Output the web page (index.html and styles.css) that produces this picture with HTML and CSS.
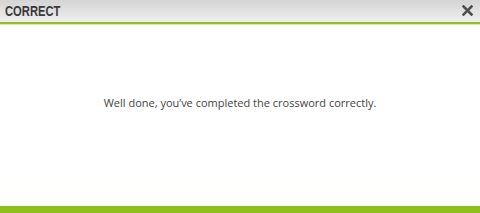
FILE: index.html
```html
<!DOCTYPE html>
<html>
<head>
<meta charset="utf-8">
<link rel="stylesheet" href="styles.css">
</head>
<body>
<div class="dialog">
  <div class="header">
    <span class="title">CORRECT</span>
    <svg class="close" width="11" height="11" viewBox="0 0 11 11"><path d="M1.5 1.5 L9.5 9.5 M9.5 1.5 L1.5 9.5" stroke="#505050" stroke-width="2.6" stroke-linecap="square"/></svg>
  </div>
  <div class="rule"></div>
  <div class="body">
    <p class="message">Well done, you’ve completed the crossword correctly.</p>
  </div>
  <div class="footer"></div>
</div>
</body>
</html>
```
FILE: styles.css
```css
html, body {
  margin: 0;
  padding: 0;
  background: #ffffff;
}
.dialog {
  width: 480px;
  height: 213px;
  display: flex;
  flex-direction: column;
}
.header {
  height: 22px;
  display: flex;
  align-items: center;
  justify-content: space-between;
  padding: 0 7px 0 5px;
  background: linear-gradient(#d4d4d4, #efefef);
}
.title {
  display: inline-block;
  font-family: "Liberation Sans", sans-serif;
  font-weight: bold;
  font-size: 14px;
  color: #3a3a3a;
  transform: scaleX(0.8);
  transform-origin: left center;
}
.close {
  display: block;
  margin-top: -1px;
}
.rule {
  height: 3px;
  background: linear-gradient(#8fc01f 0, #8fc01f 2px, #d8ebb0 2px);
}
.body {
  flex: 1;
  display: flex;
  justify-content: center;
  padding-top: 70px;
  background: linear-gradient(#ffffff 85%, #fdfefb);
}
.message {
  margin: 0;
  font-family: "Open Sans", sans-serif;
  font-size: 11px;
  color: #444444;
}
.footer {
  height: 7px;
  background: #8fbf1f;
}
```
